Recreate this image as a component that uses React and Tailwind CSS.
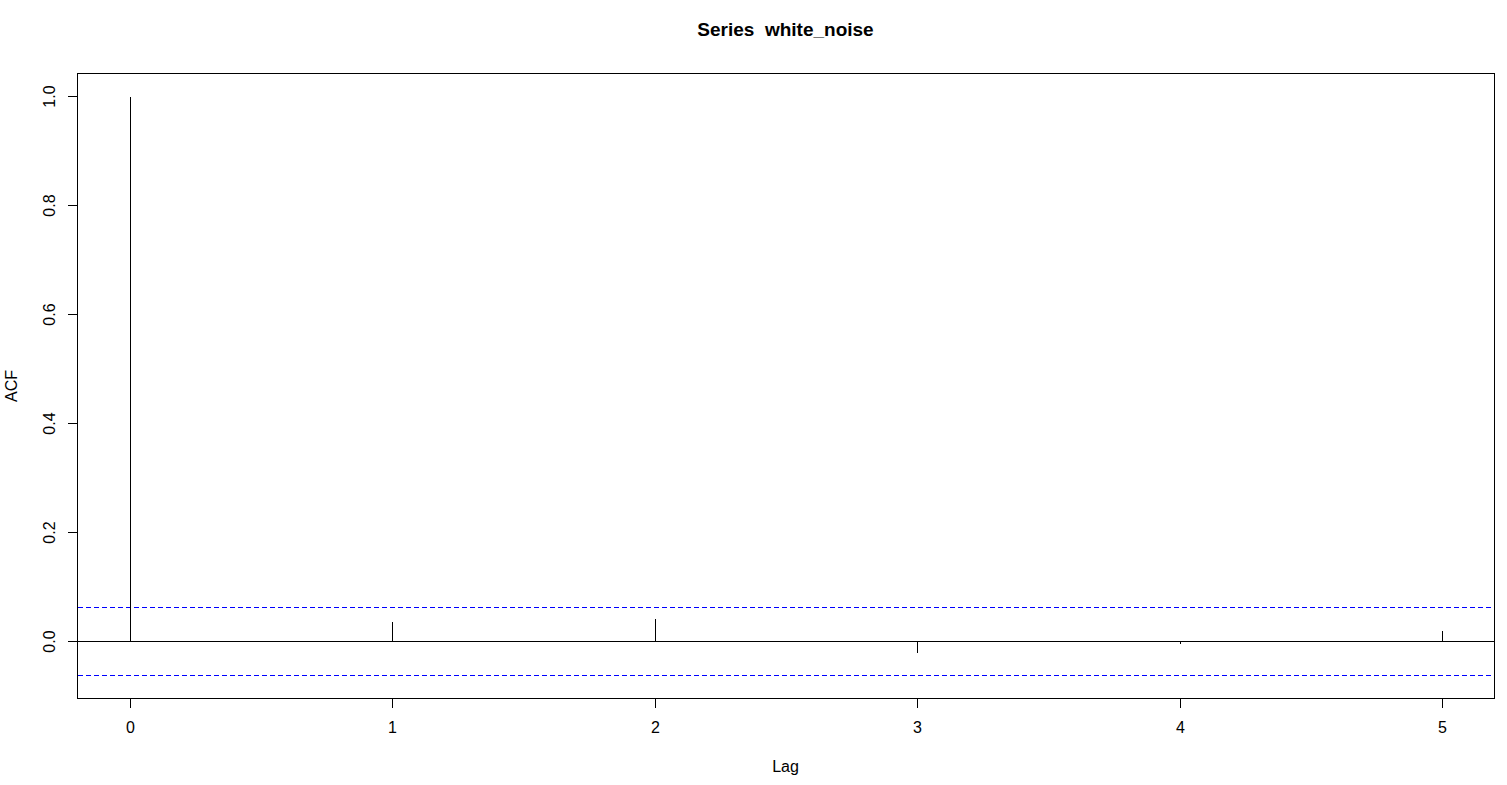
import React from "react";

const font = { fontFamily: '"Liberation Sans", Arial, sans-serif' };

// acf values read off the plot, lag -> pixel top
const zeroY = 641;
const perUnit = 545;
const lagX = (k) => 130 + k * 262.4;
const acf = [1.0, 0.037, 0.042, -0.02, -0.003, 0.021];
const yTicks = [0, 0.2, 0.4, 0.6, 0.8, 1.0];
const ci = 0.0615;

function AcfPlot() {
  const y = (v) => zeroY - v * perUnit;
  return (
    <svg
      width={1483}
      height={685}
      viewBox="24 60 1483 685"
      className="block"
      shapeRendering="crispEdges"
      style={font}
    >
      {/* box */}
      <rect x={77.5} y={73.5} width={1417} height={625} fill="none" stroke="#000" strokeWidth={1} />

      {/* y axis */}
      {yTicks.map((v) => (
        <g key={v}>
          <line x1={68} x2={77.5} y1={Math.round(y(v)) + 0.5} y2={Math.round(y(v)) + 0.5} stroke="#000" />
          <text
            x={0}
            y={0}
            transform={`translate(54.5 ${Math.round(y(v)) + 0.5}) rotate(-90)`}
            textAnchor="middle"
            fontSize={16}
            fill="#000"
            shapeRendering="auto"
          >
            {v.toFixed(1)}
          </text>
        </g>
      ))}

      {/* x axis */}
      {[0, 1, 2, 3, 4, 5].map((k) => (
        <g key={k}>
          <line x1={Math.round(lagX(k)) + 0.5} x2={Math.round(lagX(k)) + 0.5} y1={698.5} y2={708} stroke="#000" />
          <text x={Math.round(lagX(k)) + 0.5} y={733} textAnchor="middle" fontSize={16} fill="#000">
            {k}
          </text>
        </g>
      ))}

      {/* zero line and confidence bounds */}
      <line x1={77.5} x2={1494.5} y1={zeroY + 0.5} y2={zeroY + 0.5} stroke="#000" />
      <line x1={78} x2={1494} y1={Math.round(y(ci)) + 0.5} y2={Math.round(y(ci)) + 0.5} stroke="#0000ff" strokeDasharray="5 3" />
      <line x1={78} x2={1494} y1={Math.round(y(-ci)) + 0.5} y2={Math.round(y(-ci)) + 0.5} stroke="#0000ff" strokeDasharray="5 3" />

      {/* spikes */}
      {acf.map((v, k) => (
        <line
          key={k}
          x1={Math.round(lagX(k)) + 0.5}
          x2={Math.round(lagX(k)) + 0.5}
          y1={zeroY + 0.5}
          y2={Math.round(y(v)) + 0.5}
          stroke="#000"
        />
      ))}
    </svg>
  );
}

export default function App() {
  return (
    <div className="w-[1507px] h-[785px] bg-white flex flex-col overflow-hidden text-black" style={font}>
      <div className="h-[60px] flex items-center justify-center pl-[64px] pb-[2px]">
        <h1 className="text-[19px] font-bold leading-none whitespace-pre">Series  white_noise</h1>
      </div>
      <div className="flex h-[685px]">
        <div className="w-[24px] mt-[13px] h-[625px] flex items-center justify-center">
          <span className="-rotate-90 text-[16px] leading-none whitespace-nowrap">ACF</span>
        </div>
        <AcfPlot />
      </div>
      <div className="h-[40px] flex justify-center pl-[64px] pt-[13px]">
        <span className="text-[16px] leading-[18px]">Lag</span>
      </div>
    </div>
  );
}
